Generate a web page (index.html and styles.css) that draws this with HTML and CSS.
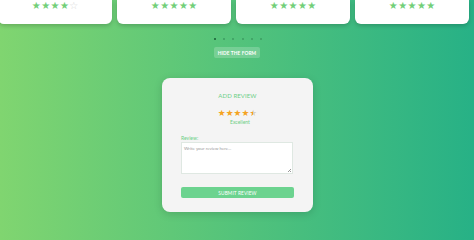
FILE: index.html
```html
<!DOCTYPE html>
<html>
<head>
<meta charset="utf-8">
<link rel="stylesheet" href="styles.css">
</head>
<body>
<div class="page">
  <div class="track">
    <div class="card"><div class="stars"><span>★</span><span>★</span><span>★</span><span>★</span><span class="off">☆</span></div></div>
    <div class="card"><div class="stars"><span>★</span><span>★</span><span>★</span><span>★</span><span>★</span></div></div>
    <div class="card"><div class="stars"><span>★</span><span>★</span><span>★</span><span>★</span><span>★</span></div></div>
    <div class="card"><div class="stars"><span>★</span><span>★</span><span>★</span><span>★</span><span>★</span></div></div>
  </div>
  <div class="dots">
    <span class="dot active"></span><span class="dot"></span><span class="dot"></span><span class="dot"></span><span class="dot"></span><span class="dot"></span>
  </div>
  <button class="toggle">HIDE THE FORM</button>
  <div class="form-card">
    <h2 class="title">ADD REVIEW</h2>
    <div class="rating">
      <span>★</span><span>★</span><span>★</span><span>★</span><span class="half">★</span>
    </div>
    <div class="rating-label">Excellent</div>
    <label class="label">Review:</label>
    <textarea class="area" placeholder="Write your review here..."></textarea>
    <button class="submit">SUBMIT REVIEW</button>
  </div>
</div>
</body>
</html>
```

FILE: styles.css
```css
html, body {
  margin: 0;
  padding: 0;
  height: 100%;
}
body {
  font-family: Lato, "Open Sans", sans-serif;
  background: linear-gradient(to right, #80d570, #27b186);
  overflow: hidden;
}
.page {
  display: flex;
  flex-direction: column;
  align-items: center;
}
.track {
  display: flex;
  gap: 5px;
  margin-left: -2px;
  align-self: flex-start;
}
.card {
  width: 114px;
  height: 24px;
  background: #fff;
  border-radius: 0 0 6px 6px;
  box-shadow: 0 2px 4px rgba(0, 0, 0, 0.18);
  display: flex;
  justify-content: center;
}
.stars {
  display: flex;
  gap: 0.4px;
  color: #72cf78;
  font-size: 10px;
  line-height: 10px;
  font-family: "DejaVu Sans", sans-serif;
  margin-top: 1px;
}
.stars .off {
  color: #d9d9d9;
}
.dots {
  display: flex;
  gap: 7.4px;
  margin-top: 13.5px;
  margin-left: 2px;
}
.dot {
  width: 2px;
  height: 2px;
  border-radius: 50%;
  background: #3c9c62;
}
.dot.active {
  background: #175c36;
}
.toggle {
  margin-top: 7.5px;
  width: 46px;
  height: 11px;
  padding: 0;
  border: none;
  border-radius: 2px;
  background: rgba(255, 255, 255, 0.2);
  color: #fff;
  font-family: Lato, sans-serif;
  font-size: 4.8px;
  font-weight: 700;
  letter-spacing: 0.1px;
}
.form-card {
  margin-top: 20px;
  width: 151px;
  height: 134px;
  box-sizing: border-box;
  background: #f4f4f4;
  border-radius: 8px;
  box-shadow: 0 2px 8px rgba(0, 0, 0, 0.15);
  padding: 14px 19px 0 19px;
  display: flex;
  flex-direction: column;
  margin-left: 1px;
}
.title {
  margin: 0;
  text-align: center;
  font-size: 6px;
  line-height: 7px;
  font-weight: 400;
  color: #6ccf86;
  letter-spacing: 0.1px;
}
.rating {
  margin-top: 9px;
  display: flex;
  justify-content: center;
  gap: 0;
  color: #f4a321;
  font-size: 8.8px;
  line-height: 10px;
  font-family: "DejaVu Sans", sans-serif;
}
.rating .half {
  background: linear-gradient(to right, #f4a321 55%, #d0d0d0 55%);
  -webkit-background-clip: text;
  background-clip: text;
  color: transparent;
}
.rating-label {
  margin-top: 1px;
  text-align: center;
  font-size: 5px;
  line-height: 6px;
  color: #6ccf86;
  padding-left: 5px;
}
.label {
  margin-top: 10px;
  font-size: 5px;
  line-height: 6px;
  color: #6ccf86;
}
.area {
  margin-top: 1px;
  width: 112px;
  height: 32px;
  box-sizing: border-box;
  border: 1px solid #dfe8e2;
  background-color: #fff;
  background-image: linear-gradient(135deg, transparent 45%, #999 45%, #999 55%, transparent 55%, transparent 75%, #999 75%, #999 85%, transparent 85%);
  background-size: 3px 3px;
  background-position: right 1px bottom 1px;
  background-repeat: no-repeat;
  padding: 3px 2px;
  font-family: Lato, sans-serif;
  font-size: 4.4px;
  resize: none;
  outline: none;
}
.area::placeholder {
  color: #9a9a9a;
}
.submit {
  margin-top: 13px;
  width: 113px;
  height: 11px;
  padding: 0;
  border: none;
  border-radius: 2px;
  background: #6cd38f;
  color: #fff;
  font-family: Lato, sans-serif;
  font-size: 4.8px;
  letter-spacing: 0.1px;
}
```
